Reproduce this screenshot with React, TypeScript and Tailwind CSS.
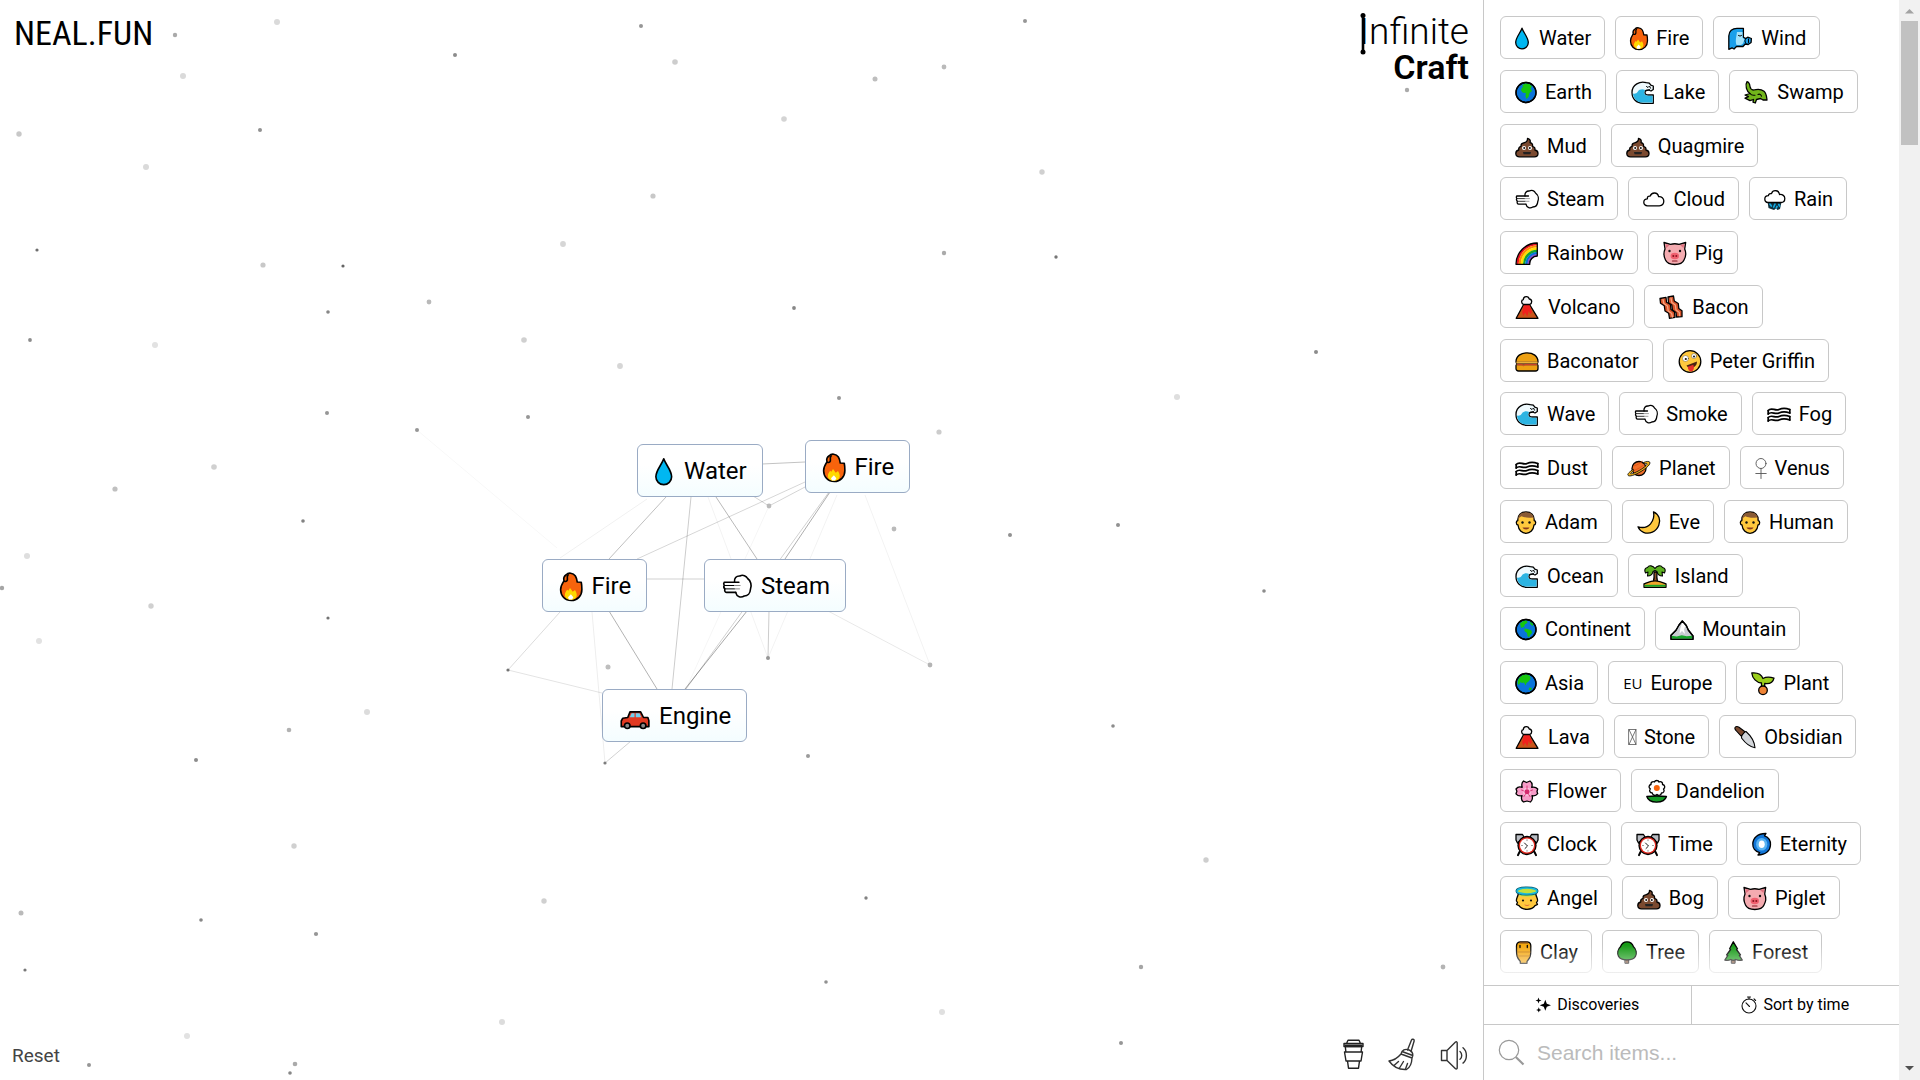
import type { ReactNode } from 'react'

type Art = { w: number; body: ReactNode }

const globe = (land: string): Art => ({
  w: 22,
  body: (
    <>
      <circle cx="11" cy="12.5" r="10" fill="#0a74da" />
      <path d={land} fill="#16c60c" stroke="none" />
      <circle cx="11" cy="12.5" r="10" fill="none" />
    </>
  ),
})

const art: Record<string, Art> = {
  drop: {
    w: 16,
    body: <path d="M7 2.2C8.6 7 13.3 11.5 13.3 16.6a6.3 6.3 0 0 1-12.6 0C.7 11.5 5.4 7 7 2.2z" fill="#00b7f1" />,
  },
  fire: {
    w: 18,
    body: (
      <>
        <path
          d="M5 3c1.5-1.8 5.5-1.8 7.3 1 1 1.6 1.2 3.2 1.5 4.8l3.2.2c.4 1.8.5 3.6.5 5.7 0 5.200-3.600 8.900-8.500 8.900S.5 20 .5 15c0-3.200 1.400-5.200 2.700-7.200C2.700 6 3.300 4 5 3z"
          fill="#f7630c"
        />
        <path d="M3.4 8.2c1.800.6 2.800-.5 2.500-2.300-.2-1-.2-2 .6-2.800" fill="none" />
        <path
          d="M8 13.5l2.2 3 1.800-1.300c.8 1.300 1.400 2.500 1.400 4 0 2.300-2 3.800-4.700 3.800s-4.800-1.500-4.800-3.900c0-1.500.8-2.900 1.800-4.100l1 .8z"
          fill="#ffd800"
          stroke="none"
        />
        <path d="M8.700 18.500l2 2.500-1 1.700H7.200l-.8-1.700z" fill="#fff" stroke="none" />
      </>
    ),
  },
  wind: {
    w: 25,
    body: (
      <>
        <path
          d="M.8 23.3V10C.8 5 4.500 2.300 9 2.300h6.400v8.900l2.300 1.300 2-1.300 3.700 1.300-.3 4-2.900 2-3-.5-2.200 2.500H8.500L6 23l-2-1.200z"
          fill="#1b9fea"
        />
        <path d="M9 6h5.500v5.500l2 2-1.500 4-2 1.500H8.500C7 15 8.500 10 9 6z" fill="#a5e3fb" stroke="none" />
        <path d="M10.500 9.500c1 .7 2 .7 3 0M18 12.800c-1.500 1-1.500 3 0 4.500M20.500 13v3.500" fill="none" strokeWidth="1" />
      </>
    ),
  },
  africa: globe('M7 5.500l3-2 4.500.5 2.500 2.500-1.500 2 1.500 2.500-2.500 2-.8 3.500-2 2.500-1.200-2.500.3-3.500-3-.3-1.800-2.200.8-2.500 1.500-1.200z'),
  americas: globe('M5 6.500l4-3 3 .2.500 2-2.500 1.500-1 2 1 1.300-2-.5-2 1zM9.500 11.500l3 .5 4 1.500.5 2.500-2 2-1 2.500-1.500-1.500-.5-3-2.500-2zM15 4.500l3 2.500v2l-2.500-1.500z'),
  asia: globe('M3 9c2-4 5-6 9-5.500l3 1.500.5 3-2 2.500-2 1.500-1 2.500-1.500-3-2 .5-1.500-1-1.500 3-1.500-1.500zM14.500 16.500l2.500.5-1.500 2.500-2-1z'),
  wave: {
    w: 24,
    body: (
      <>
        <path
          d="M22.300 23.300V15h-4.800c-2 0-3.500-1-3.500-2.500 0-1.800 1.500-2.500 3.500-2.500l2.500 1 2.300-1.500V6l-2.500-.8-1.500-2-3-.5C9 .8 1 4.500 1 12.500c0 6.500 4.500 10.800 11 10.800z"
          fill="#eef9fd"
        />
        <path
          d="M21.600 22.600V15.700h-4.500c-2.500 0-4-1.500-4-3.200l1-2.500c-2.500-1.500-6-.8-7.200 1.500-1.200 2-3.200 2.500-5 2 .5 5.500 4.500 9.100 10.100 9.100z"
          fill="#2db4e2"
          stroke="none"
        />
        <path d="M15.500 6.500l1.500 1 1.500-1.500 1 2.200M16.500 10.500l2-1" fill="none" strokeWidth="1" />
      </>
    ),
  },
  croc: {
    w: 25,
    body: (
      <>
        <path
          d="M3 1.700c2 .5 2.700 2.500 3 4.800.3 2 1.500 3.300 3.500 3.500 3.500-1 8-.8 10.500 1.200 2.500 2 2.500 5 3 8.800h-4l-2.500-1.500-4 1-1.200 3.500-2.300-.8.500-2.700-3.500 1.200-5-2.500 3.500-1.500L1 15l5-1.500C2.500 11.500.8 5 3 1.700z"
          fill="#72b51b"
        />
        <path d="M6 13.500c1 1.500 3 2 5 1.700M14 14.500c1.500-.8 3.300 0 3.500 1.700" fill="none" strokeWidth="1.1" />
      </>
    ),
  },
  poop: {
    w: 24,
    body: (
      <>
        <path
          d="M12.500 4.300c2.300.8 3.300 2.200 2.500 4.200 2 .5 3 2 2.500 3.800 2 .5 2.800 2 2.300 3.700 2 .3 3.200 1.500 3.200 3.400 0 2.200-1.400 3.400-3.600 3.400H4.500C2.200 22.800.8 21.600.8 19.400c0-1.900 1.200-3.100 3-3.400-.4-1.900.4-3.200 2.300-3.700-.3-2 .7-3.200 2.600-3.500C10.700 8.500 12.700 7 12.500 4.300z"
          fill="#7b4a30"
        />
        <circle cx="9" cy="14" r="2" fill="#fff" stroke="none" />
        <circle cx="15" cy="14" r="2" fill="#fff" stroke="none" />
        <circle cx="9.2" cy="14" r="1" fill="#111" stroke="none" />
        <circle cx="14.8" cy="14" r="1" fill="#111" stroke="none" />
        <path d="M8 18h8l-.6 2.300H8.600z" fill="#222" stroke="none" />
      </>
    ),
  },
  puff: {
    w: 24,
    body: (
      <>
        <path
          d="M10 9C9.500 5.800 11.500 3.800 14.300 4c2.500-1.400 5.200 0 6.200 2 2.500 1.800 3.500 5.400 2.300 8.400-.2 3.500-2.400 5.600-5 5.600-2.600 1.600-6 .8-6.800-2.700"
          fill="#fff"
        />
        <path d="M13.500 9H1.800c-.6.800-.6 1.600 0 2.500-.6.900-.4 1.900.5 2.800-.4 1.400 0 2.800 1.300 2.800H11" fill="none" />
        <path d="M2 11.600h7.500M2.500 14.300h7.500" fill="none" strokeWidth=".8" />
        <path d="M10 11.600h4.500M10.500 14.300h3.500" fill="none" stroke="#888" strokeWidth=".8" />
      </>
    ),
  },
  cloud: {
    w: 22,
    body: <path d="M4.500 18.800C2.200 18.800.8 17.300.8 15.300s1.500-3.500 3.600-3.500c-.3-2 1-3 2.800-2.700C8.500 5 14.500 4.800 15.600 9.600c3-.3 5.200 1.700 5.200 4.500 0 3-1.800 4.700-4.500 4.700z" fill="#fff" />,
  },
  rain: {
    w: 22,
    body: (
      <>
        <path d="M3.500 14.500l14 .5-1.500 7-2.500 1-1.500-1.500-2 1.500L7 22l-2.500-1z" fill="#10303d" stroke="none" />
        <path d="M6 17l1.300 2M11 17l-1.300 3M14.800 17.500l.8 1.500M12.300 21l.7-1.500" stroke="#12a8e0" strokeWidth="1.700" fill="none" />
        <path d="M4 15.500C2 15.500.8 14 .8 12s1.600-3.300 3.600-3.300C4.600 7 6 6.300 7.500 6.600 9 2.300 15 3 15.500 7.500c3-.3 5.300 1.300 5.300 4 0 2.500-1.500 4-3.800 4z" fill="#fff" />
      </>
    ),
  },
  rainbow: {
    w: 24,
    body: (
      <>
        <g fill="none" strokeLinecap="butt" strokeWidth="2.4">
          <path d="M2.500 23A20 20 0 0 1 22 3" stroke="#e81224" />
          <path d="M4.800 23A17.500 17.500 0 0 1 22 5.400" stroke="#ff8c00" />
          <path d="M7 23A15.200 15.200 0 0 1 22 7.700" stroke="#ffe000" />
          <path d="M9.200 23A13 13 0 0 1 22 10" stroke="#16a52a" />
          <path d="M11.500 23A10.700 10.700 0 0 1 22 12.300" stroke="#0078d7" />
          <path d="M13.500 23A8.700 8.700 0 0 1 22 14.300" stroke="#8a4fd0" />
        </g>
        <path d="M1 23.300A21.300 21.300 0 0 1 22.300 2v13a7.500 7.500 0 0 0-7.500 8.300z" fill="none" />
      </>
    ),
  },
  pig: {
    w: 24,
    body: (
      <>
        <path
          d="M1 1.500l6.500 1.800c3-.8 5.500-.8 8.500 0l6.700-1.800-1 6.500c1.500 3.500 1.300 7.500-.7 11-1 2.500-4.500 4.500-9.200 4.500s-8.200-2-9.300-4.500c-1.800-3.500-2-7.500-.5-11z"
          fill="#f4abb0"
        />
        <path d="M2.500 3l4 1.200L3.200 7zM21.200 3l-4 1.200L20.500 7z" fill="#e0707f" stroke="none" />
        <ellipse cx="11.800" cy="15" rx="4.200" ry="3.200" fill="#f0606f" stroke="none" />
        <circle cx="10.300" cy="15" r="1" fill="#8a1420" stroke="none" />
        <circle cx="13.300" cy="15" r="1" fill="#8a1420" stroke="none" />
        <circle cx="6.500" cy="10" r="1.200" fill="#111" stroke="none" />
        <circle cx="17" cy="10" r="1.200" fill="#111" stroke="none" />
        <path d="M9.500 20h4.500" stroke="#8a1420" strokeWidth="1.200" />
      </>
    ),
  },
  volcano: {
    w: 25,
    body: (
      <>
        <path d="M1.200 23.300L8.600 9.500h6L23 23.300z" fill="#c9541a" />
        <path d="M9 10h5.500l2.700 7-1.800 2-1.600-3-1.600 5.500-2-4-2 3.500-1-4z" fill="#f0211d" stroke="none" />
        <path d="M8.600 9.500C6 8.500 6 5 8.300 4.500 8.500.8 13.500.5 14.300 4c3 .3 3.200 4.500.5 5.500z" fill="#f4f4f4" />
      </>
    ),
  },
  bacon: {
    w: 25,
    body: (
      <>
        <path d="M1 3.500l6-1.200.5 5 4 2.200.5 5 3.500 2.500.5 5.300-5.500 1-.8-5L6 16l-.7-5.200-3.800-2.500z" fill="#d9532a" />
        <path d="M9 2l5.500-1 .8 5 4 2.500.5 5 3.200 2.200v6l-5.500.3-.5-4.500-3.500-2.500-.7-5-3.300-2.200z" fill="#d9532a" />
        <path d="M4 4.500l.8 4 3.700 2.500.7 5 3.500 2.500.7 3.500M12 3l.8 4.500 3.500 2.500.7 5 3.300 2.500.2 3" stroke="#f6a580" strokeWidth="1.300" fill="none" />
      </>
    ),
  },
  burger: {
    w: 24,
    body: (
      <>
        <path d="M1 12.800C1 7 6 3.800 12 3.800s11 3.200 11 9l-.8 2.200.8 1.500v3c0 1.500-1 2.500-2.500 2.500h-17C2 22 1 21 1 19.500v-3L1.800 15z" fill="#eda012" />
        <path d="M1.500 12.500h21v4h-21z" fill="#8a5a2b" stroke="none" />
        <path d="M2 13.300h20" stroke="#e9b23a" strokeWidth="1.200" />
        <path d="M3 15.700h4l1.500 1L10 15.700h11" stroke="#d83b2a" strokeWidth="1" fill="none" />
      </>
    ),
  },
  zany: {
    w: 24,
    body: (
      <>
        <circle cx="12" cy="12.500" r="10.800" fill="#ffc83d" />
        <circle cx="7.500" cy="9.500" r="3" fill="#fff" strokeWidth=".3" />
        <circle cx="16" cy="7" r="2.500" fill="#fff" strokeWidth=".3" />
        <circle cx="7.800" cy="10" r="1.100" fill="#111" stroke="none" />
        <circle cx="16" cy="7.500" r="1" fill="#111" stroke="none" />
        <path d="M8.500 16.500l10.500-4c0 3.500-2.200 6-5.500 6.300-2.300.2-4.200-.6-5-2.300z" fill="#4a2412" stroke="none" />
        <path d="M9.800 17.800l5.500-2c1 2.500.8 5.500-1.200 6.500s-4.300-1-4.300-4.500z" fill="#e8302a" stroke="none" />
      </>
    ),
  },
  waves: {
    w: 24,
    body: (
      <g fill="none" strokeWidth="1.700">
        <path d="M1.200 8.500C4.500 4.500 8 9.500 12 7.500s7-1.500 10.800 0" />
        <path d="M1.200 12C4.500 8.500 8 13 12 11s7-1.500 10.800 0" />
        <path d="M1.200 15.500C4.500 12 8 16.500 12 14.500s7-1.500 10.800 0" />
        <path d="M1.200 19C4.500 15.500 8 20 12 18s7-1.500 10.800 0" />
        <path d="M1.200 8.500v3.500M22.800 7.500V11M1.200 15.500V19M22.800 14.500V18" />
      </g>
    ),
  },
  planet: {
    w: 24,
    body: (
      <>
        <circle cx="12" cy="12.500" r="7" fill="#f3702a" />
        <path d="M7 10c3-1 6-2.500 8-4.500M6.500 14.500c4-1 8-3.500 11-6.500" stroke="#e0571a" strokeWidth="1" fill="none" />
        <path d="M6 13.500c-3.500 2.300-5.800 4.500-5 5.800 1.200 1.700 7-.2 13-3.800s9.800-7.500 8.800-9.300c-.8-1.200-3.300-.9-6 .2l.7 1.500c1.800-.6 2.500-.4 2.500 0 .2.800-2.500 3.500-7.300 6.300s-8.700 4-9 3.500c-.2-.5 1-1.500 2.800-2.800z" fill="#f0b41e" strokeWidth=".8" />
      </>
    ),
  },
  venus: {
    w: 12,
    body: (
      <g fill="none" stroke="#555" strokeWidth=".9">
        <circle cx="6" cy="7.500" r="5" />
        <path d="M6 12.500v10M.8 17.500h10.400" />
      </g>
    ),
  },
  man: {
    w: 22,
    body: (
      <>
        <path d="M2.800 10.500C2.500 5 6 2 11 2s8.500 3 8.200 8.500c2 .3 2 4.200-.2 4.500-.5 5-3.800 8.300-8 8.300S3.500 20 3 15c-2.200-.3-2.200-4.200-.2-4.500z" fill="#ffc83d" />
        <path d="M3 10C3 5 6 2.300 11 2.300S19 5 19 10l-1.300-2.500c-4.700.5-8.700 0-11.200-1.300L4.500 7.500z" fill="#8a5a34" stroke="none" />
        <circle cx="7.500" cy="12.500" r="1.200" fill="#111" stroke="none" />
        <circle cx="14.500" cy="12.500" r="1.200" fill="#111" stroke="none" />
        <path d="M7.500 17.500h7c-.8 2.500-6 2.500-7 0z" fill="#8a3a1c" stroke="none" />
      </>
    ),
  },
  moon: {
    w: 24,
    body: <path d="M16.500 1.800c5.500 2.500 7.500 8.200 5.300 13.500-2.500 6.500-9.500 9.500-15.300 7-2.500-1-4.500-3-5.500-5.500 5 1.500 9.500.5 12.500-3 2.800-3.500 4-7.500 3-12z" fill="#ffc83d" />,
  },
  island: {
    w: 24,
    body: (
      <>
        <path d="M11 8h3c-.5 4-.3 7 .7 11h-4.500c1-4 1.200-7 .8-11z" fill="#8f5528" />
        <path d="M1 23.300v-3.500c4-1.500 7-3 11-3s7.500 1.500 11 3v3.500z" fill="#f0a52a" />
        <path d="M1.600 20.800h20.800v1.900H1.600z" fill="#16a52a" stroke="none" />
        <path
          d="M12 4.500C10 1.500 6 .8 4.500 3.500 2 4 1 6 2.500 9L5 8l-.5 4c3 0 5-2 5.500-4.500l2-1 2 1c.5 2.500 2.500 4.500 5.500 4.500L19 8l2.500 1c1.500-3 .5-5-2-5.500C18 .8 14 1.500 12 4.500z"
          fill="#5cb020"
          strokeWidth="1.100"
        />
      </>
    ),
  },
  mountain: {
    w: 24,
    body: (
      <>
        <path d="M1 22.300v-4l5-5L9 8l3.300-4 4 4.500 2 4.500 4.700 6v3.300z" fill="#c9ccd2" />
        <path d="M12.300 5l3 4-1.300 3.500 1 4.500-3-3-2.500 2.500.8-5z" fill="#fff" stroke="none" />
        <path d="M1.700 21.700v-3l5 .8 5-1.300 5 1 5.600-.5v3z" fill="#16a52a" stroke="none" />
        <path d="M1 22.300v-4l5-5L9 8l3.300-4 4 4.500 2 4.500 4.700 6v3.300z" fill="none" />
      </>
    ),
  },
  sprout: {
    w: 24,
    body: (
      <>
        <path d="M10.500 18v-6C5.500 11.500 1.300 7.500.8 2c5.200-.5 9.700 1.500 11.200 5.500 2.500-1.500 7-1.700 11-.4-1 4.400-5 6-9.300 5.400V18z" fill="#9bcf1c" />
        <circle cx="12" cy="19.300" r="4.300" fill="#ee8335" />
      </>
    ),
  },
  knife: {
    w: 22,
    body: (
      <>
        <path d="M8 7.800l4-1.300c4.500 4 8.500 9.500 9 16.300-5-.8-9.500-4.500-13.500-9.800z" fill="#d3d6da" strokeWidth="1.100" />
        <path d="M1 2.500c1-1.300 2.500-1.200 4-.3l6 4.500-3.800 4.500L2 5.500C1 4.500.5 3.500 1 2.500z" fill="#7b4a30" strokeWidth="1.100" />
      </>
    ),
  },
  blossom: {
    w: 24,
    body: (
      <>
        <path
          d="M8.500 2l3 1.500 3.500-1.500c2 1.500 2.500 4 1.700 6.300 2.300-.6 4.500 0 6 1.700l-.7 2.500.7 2.200c-1.500 2-3.500 2.500-5.700 2 .8 2.300.3 4.800-1.500 6.300l-3.500-1-3.500 1c-2-1.500-2.500-4-1.500-6.300-2.300.6-4.500 0-6-1.900l.9-2.500-.9-2.300c1.500-2 4-2.500 6.200-1.700C6.500 6 6.700 3.500 8.500 2z"
          fill="#f79cc8"
        />
        <circle cx="12" cy="12.800" r="4" fill="#fbc3de" stroke="none" />
        <circle cx="12" cy="12.800" r="2.500" fill="#d42a6e" stroke="none" />
        <path d="M12 7v2.500M17.500 11l-2 .8M15 17.500l-1.300-2M9 17.500l1.300-2M6.500 11l2 .8" stroke="#d42a6e" strokeWidth=".9" />
      </>
    ),
  },
  daisy: {
    w: 22,
    body: (
      <>
        <path d="M10 17l-9.200.5c1 3.500 4 5.500 9.700 5.700 5.700-.2 9-2.200 10-5.700L11 17z" fill="#169a26" />
        <path
          d="M8.500 3C9 1 12.500 1 13 3c2-1 4 .5 3.500 2.500 2.500.3 3 3.500 1 4.500 1.500 2 0 4-2 4-.5 2.500-3 3-4.500 1.500-1.500 1.500-4.500 1-4.700-1.500C4 14 2.800 11.700 4.300 9.800c-2-1-1.500-4 .7-4.300C4.500 3.500 6.500 2 8.500 3z"
          fill="#fff"
        />
        <circle cx="10.800" cy="9" r="3" fill="#f7630c" stroke="none" />
      </>
    ),
  },
  clock: {
    w: 24,
    body: (
      <>
        <path d="M1 8V2.500h6.500L9 5l-6.500 6zM23 8V2.500h-6.500L15 5l6.500 6z" fill="#b9bdc4" />
        <path d="M4.500 20L3 23.200M19.500 20l1.500 3.200" strokeWidth="2" />
        <circle cx="12" cy="13.500" r="9" fill="#e0261b" />
        <circle cx="12" cy="13.500" r="7" fill="#fff" stroke="none" />
        <path d="M9.500 11l3 3-2.500 2.500" fill="none" strokeWidth=".9" />
        <path d="M12 7.700v1M12 18.300v1M6.500 13.500h1M16.500 13.500h1" stroke="#888" strokeWidth=".9" />
      </>
    ),
  },
  cyclone: {
    w: 20,
    body: (
      <>
        <path
          d="M14 1.500l-1.500 2.300c4.200 1.500 6.300 5 6 9.200-.3 5.500-4.500 10-12.500 10l1.800-2.300C3 19.500.6 15.700.8 11.800 1 6 5.500 1.300 14 1.500z"
          fill="#1276d8"
        />
        <ellipse cx="9.700" cy="12.300" rx="5.600" ry="6.300" fill="#59b4f2" stroke="none" />
        <ellipse cx="9.700" cy="12.300" rx="3" ry="3.800" fill="#fff" stroke="none" />
      </>
    ),
  },
  angel: {
    w: 24,
    body: (
      <>
        <path d="M3 9c.5-4 4-6 9-6s8.500 2 9 6c.5 2 2 4 1.500 6l-1 1.500 1 2-2.500 1.200C18.500 22 15.500 23.300 12 23.300s-6.500-1.300-8-3.600L1.500 18.500l1-2-1-1.500C1 13 2.500 11 3 9z" fill="#ffc83d" />
        <path d="M4 9.500C5 7 9 5.500 12 5.500s7 1.500 8 4c-3 1.500-13 1.500-16 0z" fill="#b8e04a" stroke="none" />
        <ellipse cx="12" cy="5" rx="10" ry="3" fill="none" stroke="#06586e" strokeWidth="3" />
        <ellipse cx="12" cy="5" rx="10" ry="3" fill="#c6e03a" stroke="#19b9dc" strokeWidth="1.600" />
        <circle cx="8" cy="14.500" r="1.100" fill="#111" stroke="none" />
        <circle cx="16" cy="14.500" r="1.100" fill="#111" stroke="none" />
        <path d="M10 19c1.200.8 2.800.8 4 0" fill="none" stroke="#e0703a" strokeWidth="1" />
      </>
    ),
  },
  amphora: {
    w: 17,
    body: (
      <>
        <path d="M5 2h7.500c2.500 0 3.500 2 3.300 5-.1 3 .3 6-.6 9.200-.7 2.500-2 4-3.200 5.300v1.800H5.300v-1.800c-1.200-1.300-2.500-2.800-3.200-5.300C1.200 13 1.600 10 1.500 7 1.300 4 2.500 2 5 2z" fill="#f5a80f" />
        <path d="M5 5.500v2M12.300 5.500v2" />
        <path d="M5.300 2.700h7" stroke="#7b4a1a" strokeWidth="1.800" />
        <path d="M2.500 12h12.500M3 16h11.500" stroke="#c77a08" strokeWidth="1.100" />
      </>
    ),
  },
  tree: {
    w: 21,
    body: (
      <>
        <path d="M8.300 18h3.400v5.300H8.300z" fill="#7b4a30" strokeWidth="1" />
        <path d="M10 1.800c3.500 0 5.500 2 6.500 5 2.800 2.500 3.500 6.500 2 9.500-1 2.200-3.500 3.700-8.500 3.700s-7.500-1.500-8.500-3.700c-1.500-3-.8-7 2-9.500 1-3 3-5 6.500-5z" fill="#169a16" />
      </>
    ),
  },
  pine: {
    w: 20,
    body: (
      <>
        <path d="M7.700 18h3.400v5.300H7.700z" fill="#7b4a30" strokeWidth="1" />
        <path d="M9.300 1.800l4.200 7-1 .7 4 5.500-1.200.5 3 4.500c-2.500.5-4 .8-6.500-.5-1.500 1-3.500 1-5 0-2.500 1.300-4 1-6 .5l3-4.500-1.200-.5 4-5.500-1-.7z" fill="#169a16" />
      </>
    ),
  },
  car: {
    w: 24,
    body: (
      <>
        <path d="M1 20.500V16l1.200-2.200 4-.6L8 8.700h8.500l2.300 4.500h3.500l.8 2.500v4.800z" fill="#e23a22" />
        <path d="M7.800 13l1.500-3.200h2.300V13zM12.600 9.800h3L17 13h-4.400z" fill="#6fd0ef" stroke="none" />
        <circle cx="5.800" cy="19.800" r="2.200" fill="#888" />
        <circle cx="18.500" cy="19.800" r="2.200" fill="#888" />
      </>
    ),
  },
  tofu: {
    w: 7,
    body: <path d="M0 4.500h7v15H0zM0 4.500l7 15M7 4.500l-7 15" fill="none" stroke="#555" strokeWidth=".8" />,
  },
}

function Emoji({ name, scale = 1 }: { name: string; scale?: number }) {
  const { w, body } = art[name]
  return (
    <svg
      width={w * scale}
      height={24 * scale}
      viewBox={`0 0 ${w} 24`}
      className="shrink-0 overflow-visible"
      stroke="#000"
      strokeWidth="1.3"
      strokeLinejoin="round"
      strokeLinecap="round"
      aria-hidden="true"
    >
      {body}
    </svg>
  )
}

const items: [string, string][] = [
  ['drop', 'Water'], ['fire', 'Fire'], ['wind', 'Wind'],
  ['africa', 'Earth'], ['wave', 'Lake'], ['croc', 'Swamp'],
  ['poop', 'Mud'], ['poop', 'Quagmire'],
  ['puff', 'Steam'], ['cloud', 'Cloud'], ['rain', 'Rain'],
  ['rainbow', 'Rainbow'], ['pig', 'Pig'],
  ['volcano', 'Volcano'], ['bacon', 'Bacon'],
  ['burger', 'Baconator'], ['zany', 'Peter Griffin'],
  ['wave', 'Wave'], ['puff', 'Smoke'], ['waves', 'Fog'],
  ['waves', 'Dust'], ['planet', 'Planet'], ['venus', 'Venus'],
  ['man', 'Adam'], ['moon', 'Eve'], ['man', 'Human'],
  ['wave', 'Ocean'], ['island', 'Island'],
  ['americas', 'Continent'], ['mountain', 'Mountain'],
  ['asia', 'Asia'], ['EU', 'Europe'], ['sprout', 'Plant'],
  ['volcano', 'Lava'], ['tofu', 'Stone'], ['knife', 'Obsidian'],
  ['blossom', 'Flower'], ['daisy', 'Dandelion'],
  ['clock', 'Clock'], ['clock', 'Time'], ['cyclone', 'Eternity'],
  ['angel', 'Angel'], ['poop', 'Bog'], ['pig', 'Piglet'],
  ['amphora', 'Clay'], ['tree', 'Tree'], ['pine', 'Forest'],
]

const placed = [
  { icon: 'drop', label: 'Water', pos: 'left-[637px] top-[444px]' },
  { icon: 'fire', label: 'Fire', pos: 'left-[805px] top-[440px]' },
  { icon: 'fire', label: 'Fire', pos: 'left-[542px] top-[559px]' },
  { icon: 'puff', label: 'Steam', pos: 'left-[704px] top-[559px]' },
  { icon: 'car', label: 'Engine', pos: 'left-[602px] top-[689px]' },
]

// x, y, radius, grey level
const dots = [
  [175, 35, 2.2, 170], [183, 76, 3, 218], [277, 22, 3, 218], [260, 130, 2, 145], [19, 134, 2.7, 200],
  [146, 167, 3, 218], [455, 55, 2, 140], [641, 26, 2, 150], [675, 62, 2.8, 205], [653, 196, 2.6, 200],
  [563, 244, 2.9, 214], [37, 250, 1.6, 110], [263, 265, 2.6, 200], [343, 266, 1.6, 100], [429, 302, 2.4, 185],
  [328, 312, 1.8, 135], [30, 340, 1.9, 140], [155, 345, 3, 226], [524, 340, 2.8, 208], [620, 366, 2.9, 214],
  [327, 413, 2, 150], [417, 430, 2, 150], [528, 417, 2, 150], [214, 467, 2.8, 208], [115, 489, 2.6, 192],
  [303, 521, 1.8, 130], [27, 556, 3, 222], [2, 588, 2.2, 165], [151, 606, 2.7, 208], [328, 618, 1.6, 115],
  [39, 641, 3, 226], [508, 670, 1.6, 115], [608, 667, 2.5, 190], [367, 712, 3, 220], [289, 730, 2.3, 178],
  [196, 760, 2, 140], [605, 763, 1.6, 125], [294, 846, 2.7, 208], [544, 901, 2.7, 208], [21, 913, 2.5, 186],
  [201, 920, 1.8, 135], [316, 934, 2.1, 150], [25, 970, 1.6, 120], [502, 1022, 3, 220], [187, 1036, 3, 226],
  [89, 1065, 2, 150], [295, 1064, 2.3, 170], [290, 1073, 1.8, 135], [1025, 21, 2, 150], [944, 67, 2.4, 186],
  [875, 79, 2.5, 190], [784, 119, 2.8, 212], [1407, 90, 2.2, 170], [1042, 172, 2.7, 208], [944, 253, 2.2, 170],
  [1056, 257, 1.7, 118], [794, 308, 1.9, 135], [1316, 352, 2, 140], [839, 398, 2, 150], [1177, 397, 3, 222],
  [939, 432, 2.6, 204], [769, 506, 2.4, 186], [894, 529, 2.4, 186], [1010, 535, 2, 145], [1118, 525, 2, 145],
  [1264, 591, 1.8, 140], [930, 665, 2.4, 180], [768, 658, 2, 150], [1113, 726, 1.8, 140], [808, 756, 2, 155],
  [1206, 860, 2.7, 206], [866, 898, 1.7, 130], [1141, 967, 2.2, 165], [826, 982, 1.8, 145], [1443, 967, 2.4, 180],
  [942, 1012, 3, 224], [1121, 1043, 2, 150],
]

// x1, y1, x2, y2, opacity
const links = [
  [762, 464, 805, 462, 0.24], [666, 497, 609, 559, 0.25], [691, 497, 672, 689, 0.2], [716, 497, 757, 559, 0.28],
  [753, 496, 769, 506, 0.17], [769, 506, 805, 487, 0.17], [805, 482, 637, 559, 0.16], [830, 492, 785, 559, 0.32],
  [829, 492, 686, 689, 0.18], [747, 611, 685, 689, 0.34], [647, 579, 704, 579, 0.18], [609, 611, 657, 689, 0.3],
  [560, 612, 508, 670, 0.14], [508, 670, 602, 693, 0.11], [631, 741, 605, 763, 0.18], [769, 611, 768, 658, 0.2],
  [828, 611, 930, 665, 0.09], [647, 499, 560, 558, 0.06], [592, 612, 605, 763, 0.07], [865, 495, 930, 665, 0.05],
  [708, 497, 768, 658, 0.05], [837, 495, 768, 658, 0.05], [769, 506, 686, 689, 0.04], [417, 430, 557, 548, 0.03],
]

function Particles() {
  return (
    <svg className="absolute inset-0 h-full w-full" aria-hidden="true">
      {links.map(([x1, y1, x2, y2, o], i) => (
        <line key={i} x1={x1} y1={y1} x2={x2} y2={y2} stroke="#000" strokeOpacity={o} />
      ))}
      {dots.map(([x, y, r, g], i) => (
        <circle key={i} cx={x} cy={y} r={r} fill={`rgb(${g} ${g} ${g})`} />
      ))}
    </svg>
  )
}

function Tools() {
  return (
    <div className="flex items-center gap-5">
      <button aria-label="Buy a coffee">
        <svg width="32" height="32" viewBox="-2 2 32 32" className="overflow-visible" fill="none" stroke="#222" strokeWidth="1.4" strokeLinejoin="round">
          <path d="M9.500 5.500L11 2.200h11l1.500 3.300M7 5.500h19v3H7z" />
          <path d="M7.500 7.500h18" strokeWidth="2" />
          <path d="M8.300 8.500h16.400l-.6 5.500H8.900zM7.500 14h18l-1.500 9H9zM10.500 23h12l-1 7.200h-10z" />
        </svg>
      </button>
      <button aria-label="Clear the board">
        <svg width="32" height="32" viewBox="2 3 32 32" className="overflow-visible" fill="none" stroke="#333" strokeWidth="1.4" strokeLinejoin="round" strokeLinecap="round">
          <path d="M22.500 13l4-10c.6-1.400 2.900-.8 2.700.8L26 14.500" />
          <path d="M17 14.500c1.500-1.800 4.500-2.500 7-1.500s4 3 3.800 5.500zM16 17l11 4M17 14.500l-1 2.500c-3 3.500-6.500 6.500-12 7 4 5.500 10.500 9 17.500 8.500 3.500-2 5.300-6.500 5.500-11.500l.8-2.500" />
          <path d="M13.500 24.500L9 28.500M18.500 24.500l-4 6.500M22.500 26.500l-2 5.500" />
        </svg>
      </button>
      <button aria-label="Sound">
        <svg width="32" height="32" viewBox="0 1 32 32" fill="none" stroke="#333" strokeWidth="1.4" strokeLinejoin="round" strokeLinecap="round">
          <path d="M2.500 11.500h5.500v10H2.500zM8 11.500l8.500-8.500c.8-.6 1.700-.2 1.700.8v25.200c0 1-1 1.300-1.700.7L8 21.500" />
          <path d="M21 12.500c2.300 1.800 2.300 6 0 7.800M24 8.700c4.500 3.700 4.500 11.700 0 15.400" />
        </svg>
      </button>
    </div>
  )
}

function Sidebar() {
  return (
    <aside className="flex w-[416px] shrink-0 flex-col border-l border-[#c8c8c8]">
      <div className="relative min-h-0 flex-1 overflow-hidden">
        <div className="flex h-full flex-wrap content-between gap-x-[10px] pt-4 pr-5 pb-3 pl-4">
          {items.map(([icon, label]) => (
            <button
              key={label}
              className="flex h-[43px] items-center gap-2 rounded-md border border-[#c8c8c8] bg-white pt-px pr-[13px] pl-[14px] text-[20px] leading-6"
            >
              {icon === 'EU' ? <span className="font-['Open_Sans',sans-serif] text-[15px]">EU</span> : <Emoji name={icon} />}
              {label}
            </button>
          ))}
        </div>
        <div className="pointer-events-none absolute inset-x-0 bottom-0 h-10 bg-gradient-to-b from-white/0 to-white" />
      </div>

      <div className="grid h-10 grid-cols-2 border-y border-[#c8c8c8] text-base">
        <button className="flex items-center justify-center gap-[6px] border-r border-[#c8c8c8]">
          <svg width="16" height="16" viewBox="0 0 16 16" aria-hidden="true">
            <path d="M10.300 2.800l1.500 4 4.200 1.400-4.200 1.500-1.500 4-1.500-4-4.100-1.500 4.100-1.400z" />
            <path d="M3.500.5l.8 2.200 2.200.8-2.200.8-.8 2.200-.8-2.200L.5 3.500l2.200-.8zM3.800 10.300l.7 1.900 1.900.7-1.900.8-.7 1.900-.8-1.900-1.800-.8 1.800-.7z" />
          </svg>
          Discoveries
        </button>
        <button className="flex items-center justify-center gap-[6px]">
          <svg width="16" height="18" viewBox="0 0 16 18" fill="none" stroke="#111" strokeWidth="1.1" strokeLinecap="round" aria-hidden="true">
            <circle cx="8" cy="10" r="7" />
            <path d="M8.500 10.500L5 6.800M6.500 1h3M8 1v2M13 2.800l1.600 1.700" />
          </svg>
          Sort by time
        </button>
      </div>

      <label className="flex h-[55px] items-center gap-3 pl-[14px]">
        <svg width="27" height="27" viewBox="0 0 27 27" fill="none" stroke="#999" aria-hidden="true">
          <circle cx="11" cy="11" r="9.700" strokeWidth="1.2" />
          <path d="M17.800 18l7.700 7.500" strokeWidth="2.2" />
        </svg>
        <input
          type="text"
          aria-label="Search items"
          placeholder="Search items..."
          className="min-w-0 flex-1 font-['Liberation_Sans',Arial,sans-serif] text-[21px] outline-none placeholder:text-[#bbb]"
        />
      </label>
    </aside>
  )
}

function Scrollbar() {
  return (
    <div className="flex w-[21px] shrink-0 flex-col items-center bg-[#f1f1f1]" aria-hidden="true">
      <svg width="21" height="21" viewBox="0 0 21 21">
        <path d="M6 13.500L10.500 9l4.500 4.500z" fill="#a3a3a3" />
      </svg>
      <div className="h-[124px] w-[17px] bg-[#c1c1c1]" />
      <svg width="21" height="21" viewBox="0 0 21 21" className="mt-auto">
        <path d="M6 7l4.500 4.500L15 7z" fill="#505050" />
      </svg>
    </div>
  )
}

export default function App() {
  return (
    <div className="flex h-screen overflow-hidden bg-white font-[Roboto,sans-serif] text-black">
      <main className="relative flex min-w-0 flex-1 flex-col justify-between">
        <Particles />
        {placed.map(({ icon, label, pos }) => (
          <div
            key={pos}
            className={`absolute flex h-[53px] items-center gap-[9px] rounded-md border border-[#9aabc4] bg-gradient-to-b from-white from-40% to-[#f4fdff] pr-[15px] pl-[17px] text-[24px] leading-8 ${pos}`}
          >
            <Emoji name={icon} scale={1.25} />
            {label}
          </div>
        ))}

        <header className="relative flex items-start justify-between pt-3 pr-[14px] pl-[14px]">
          <a href="/" className="font-['Roboto_Condensed',Roboto,sans-serif] text-[34px] leading-[42px]">
            NEAL.FUN
          </a>
          <h1 className="relative text-right">
            <span className="block text-[37px] leading-10 font-light">Infinite</span>
            <span className="block text-[34px] leading-[30px] font-semibold">Craft</span>
            <svg width="8" height="44" viewBox="0 0 8 44" className="absolute top-0 left-0" aria-hidden="true">
              <path d="M4 4v36" stroke="#000" strokeWidth="2.6" />
              <circle cx="4" cy="3.500" r="2.500" />
              <circle cx="4" cy="40" r="2.500" />
            </svg>
          </h1>
        </header>

        <footer className="relative flex items-center justify-between pr-3 pb-2 pl-3">
          <button className="text-[19px] text-[#444]">Reset</button>
          <Tools />
        </footer>
      </main>
      <Sidebar />
      <Scrollbar />
    </div>
  )
}
